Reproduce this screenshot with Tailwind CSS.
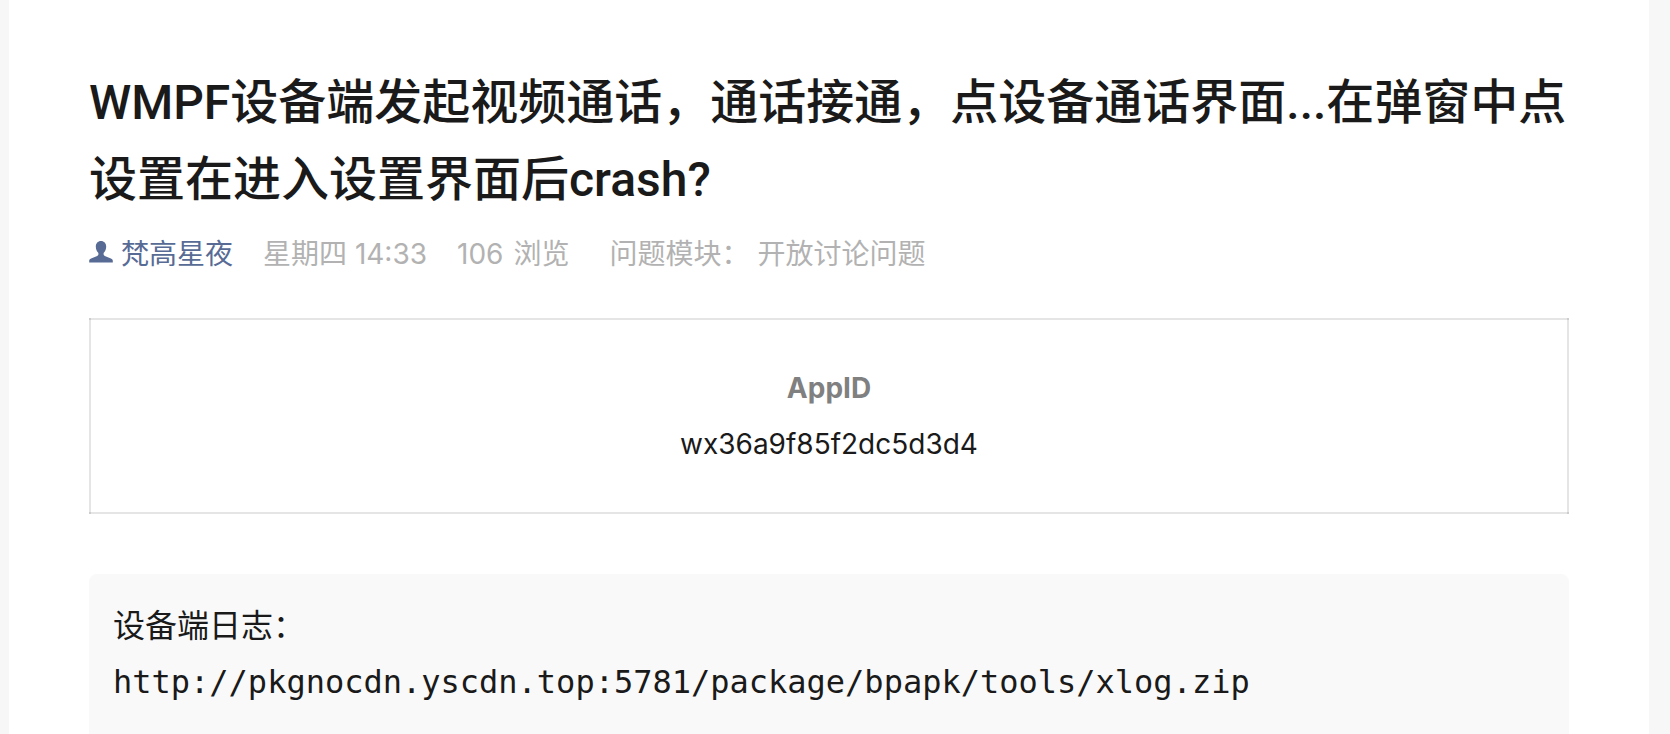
<!DOCTYPE html>
<html lang="zh-CN">
<head>
<meta charset="utf-8">
<meta name="viewport" content="width=device-width, initial-scale=1">
<title>WMPF设备端发起视频通话</title>
<script src="https://cdn.jsdelivr.net/npm/@tailwindcss/browser@4"></script>
</head>
<body class="bg-[#f7f7f7] text-[#1a1a1a] font-['Inter','Noto_Sans_CJK_SC',sans-serif]">
<main class="ml-[9px] mr-[21px] min-h-screen bg-white px-20 pt-16">
  <h1 class="font-['Roboto','Noto_Sans_CJK_SC',sans-serif] text-[48px] leading-[77px] font-medium">WMPF设备端发起视频通话，通话接通，点设备通话界面...在弹窗中点设置在进入设置界面后crash?</h1>
  <div class="mt-4 flex items-center text-[28px] leading-10 text-[#b2b2b2]">
    <a href="#" class="flex items-center gap-2 text-[#576b95]">
      <svg class="mb-1 h-6 w-6" viewBox="0 0 24 24" fill="currentColor" aria-hidden="true"><path d="M12 1C8.900 1 6.800 3.300 6.800 6.600c0 2.700 1.100 5 2.600 6.300v1.700c-.1.700-.5 1-1.200 1.300L2.100 18.500C.8 19.100.200 19.700.200 20.900V22.600h23.600v-1.700c0-1.200-.6-1.800-1.900-2.400l-6.100-2.600c-.7-.3-1.100-.6-1.200-1.300v-1.700c1.500-1.300 2.600-3.600 2.600-6.300C17.200 3.300 15.100 1 12 1z"/></svg>
      <span>梵高星夜</span>
    </a>
    <time class="ml-[30px]">星期四 14:33</time>
    <span class="ml-[30px]">106</span>
    <span class="ml-[10px]">浏览</span>
    <span class="ml-10">问题模块：</span>
    <span class="ml-2">开放讨论问题</span>
  </div>
  <section class="relative mt-11 border-2 border-transparent py-10 text-center text-[28px] leading-[56px] before:absolute before:-inset-0.5 before:border-x-2 before:border-black/10 after:absolute after:-inset-0.5 after:border-y-2 after:border-black/10">
    <h2 class="font-bold text-[#808080]">AppID</h2>
    <p>wx36a9f85f2dc5d3d4</p>
  </section>
  <pre class="mt-[60px] rounded-lg bg-[#f9f9f9] p-6 pb-20 font-['DejaVu_Sans_Mono','Noto_Sans_CJK_SC',monospace] text-[32px] leading-[56px] whitespace-pre-wrap"><code class="font-['DejaVu_Sans_Mono','Noto_Sans_CJK_SC',monospace]">设备端日志：
http://pkgnocdn.yscdn.top:5781/package/bpapk/tools/xlog.zip</code></pre>
</main>
</body>
</html>
